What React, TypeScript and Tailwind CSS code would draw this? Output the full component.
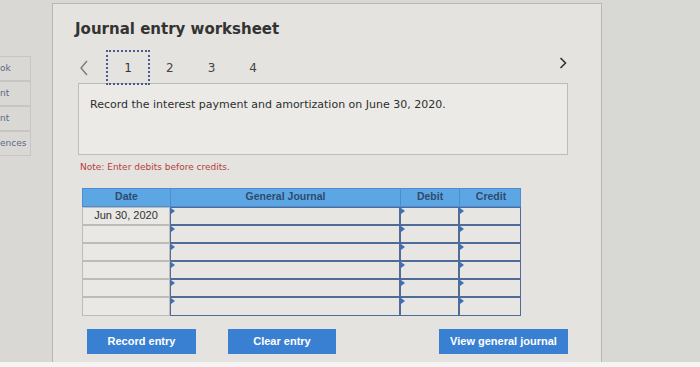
import React from 'react'

const rows = [0, 1, 2, 3, 4, 5]

function Cell() {
  return (
    <div className="relative h-[18.2px] border-[1.5px] border-[#4f6c99] bg-[#e7e6e2]">
      <div className="absolute left-0 top-0 h-0 w-0 border-y-[3px] border-l-[4px] border-y-transparent border-l-[#3b6fc0]" />
    </div>
  )
}

export default function App() {
  return (
    <div className="flex h-[367px] w-[700px] flex-col overflow-hidden bg-[#d9d8d4] font-['DejaVu_Sans',sans-serif]">
      <div className="flex h-[362px]">
        {/* sidebar */}
        <div className="w-[52px] pt-[56px]">
          {['ok', 'nt', 'nt', 'ences'].map((t, i) => (
            <div key={i} className="flex h-[25px] w-[31px] items-center overflow-hidden border border-l-0 border-[#c7c6c2] text-[9px] text-[#5a6a86]">
              <span className="whitespace-nowrap">{t}</span>
            </div>
          ))}
        </div>

        {/* main panel */}
        <div className="mt-[3px] w-[550px] border-l border-t border-r border-[#b8b7b3] bg-[#e4e3df] pl-[22px] pr-[30px]">
          <h1 className="mt-[14px] text-[15px] font-bold text-[#333] leading-[22px]">Journal entry worksheet</h1>
          <div className="mt-[10px] flex items-center">
            <svg className="ml-[4px]" width="10" height="16" viewBox="0 0 10 16">
              <path d="M8 1 L2 8 L8 15" fill="none" stroke="#7a7a7a" strokeWidth="1.4" />
            </svg>
            <div className="ml-[17px] flex h-[35px] w-[44px] items-center justify-center border-2 border-dotted border-[#4a5a90] text-[12px] text-[#333]">1</div>
            <span className="ml-[16px] text-[12px] text-[#444]">2</span>
            <span className="ml-[34px] text-[12px] text-[#444]">3</span>
            <span className="ml-[34px] text-[12px] text-[#444]">4</span>
            <svg className="ml-auto mb-[10px] mr-[4px]" width="8" height="12" viewBox="0 0 8 12">
              <path d="M1.5 1 L6.5 6 L1.5 11" fill="none" stroke="#333" strokeWidth="1.6" />
            </svg>
          </div>
          <div className="ml-[3px] -mt-[2px] h-[72px] w-[490px] border border-[#bdbcb8] bg-[#ebeae7] px-[11px] pt-[13px] text-[11px] text-[#2e2e2e]">
            Record the interest payment and amortization on June 30, 2020.
          </div>
          <p className="ml-[5px] mt-[6px] text-[9px] text-[#b6403a]">Note: Enter debits before credits.</p>

          <div className="ml-[7px] mt-[13px] w-[439px]">
            <div className="grid grid-cols-[88px_230px_59px_62px] border-[1.5px] border-[#4e8bd0] bg-[#5ca7e3] text-[10.5px] font-semibold text-[#2f4b6e] font-['Liberation_Sans',sans-serif]">
              <div className="flex h-[17px] items-center justify-center border-r border-[#4e8bd0]">Date</div>
              <div className="flex items-center justify-center border-r border-[#4e8bd0]">General Journal</div>
              <div className="flex items-center justify-center border-r border-[#4e8bd0]">Debit</div>
              <div className="flex items-center justify-center">Credit</div>
            </div>
            {rows.map((r) => (
              <div key={r} className="grid grid-cols-[88px_230px_59px_62px]">
                <div className="flex h-[18.2px] items-center justify-center border border-[#bdbcb8] bg-[#e9e8e4] text-[11px] text-[#333] font-['Liberation_Sans',sans-serif]">
                  {r === 0 ? 'Jun 30, 2020' : ''}
                </div>
                <Cell />
                <Cell />
                <Cell />
              </div>
            ))}
          </div>

          <div className="mt-[13px] flex font-['Liberation_Sans',sans-serif] text-[11px] font-bold text-white">
            <button className="ml-[12px] h-[25px] w-[109px] bg-[#3a80d2]">Record entry</button>
            <button className="ml-[32px] h-[25px] w-[108px] bg-[#3a80d2]">Clear entry</button>
            <button className="ml-[103px] h-[25px] w-[129px] bg-[#3a80d2]">View general journal</button>
          </div>
        </div>

        <div className="flex-1 bg-[#d8d8d4]" />
      </div>
      <div className="flex-1 bg-[#f4f4f4]" />
    </div>
  )
}
